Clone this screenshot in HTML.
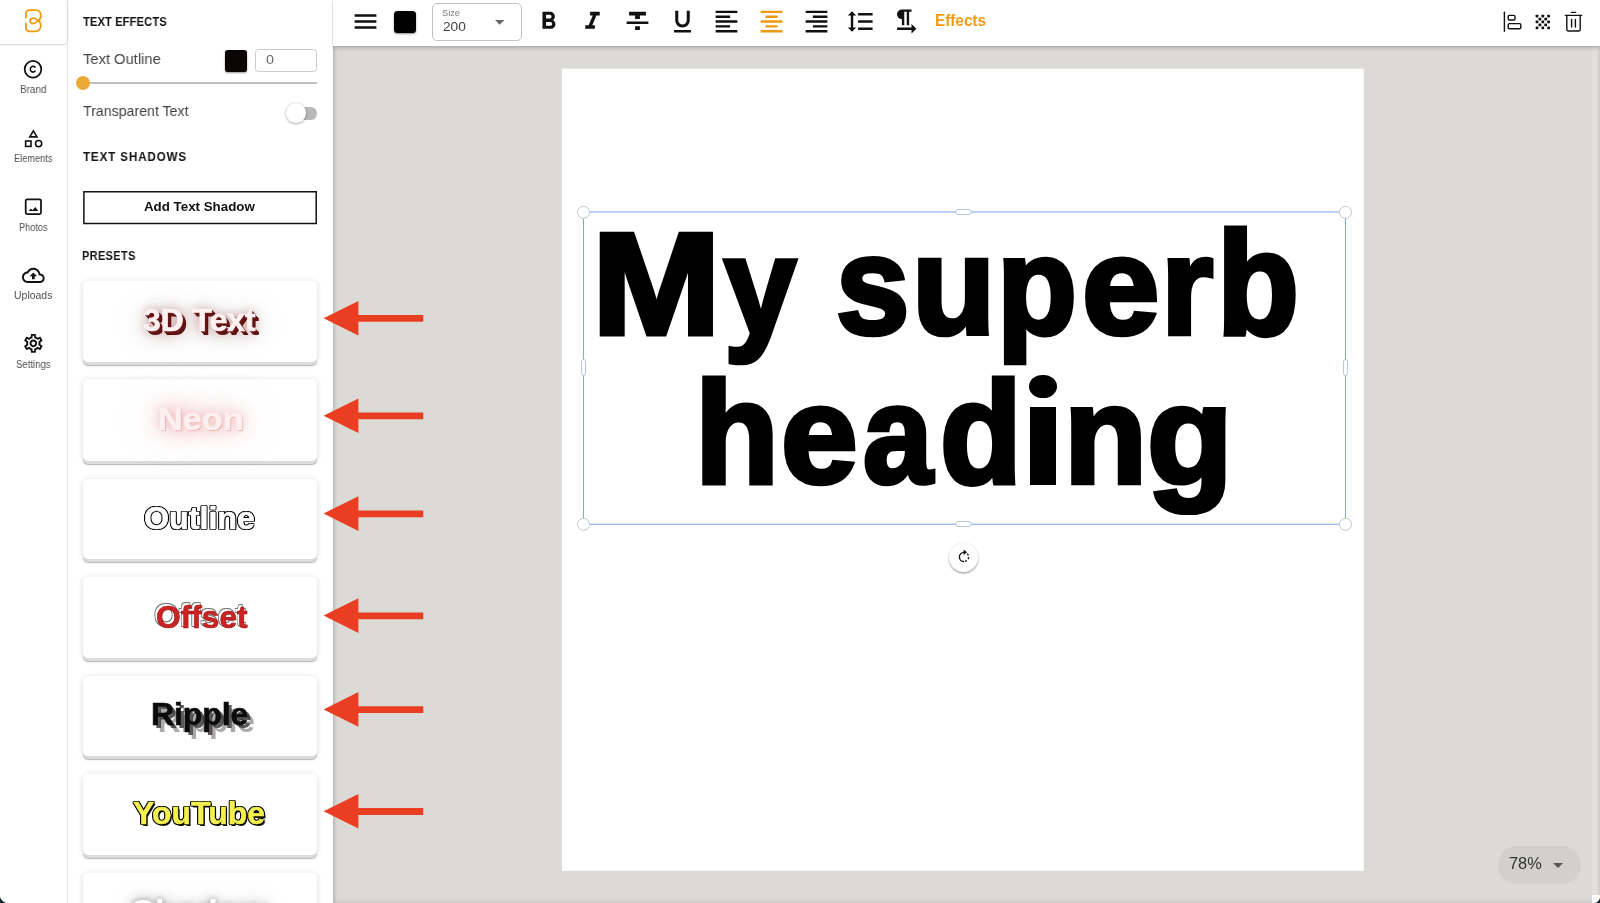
<!DOCTYPE html>
<html>
<head>
<meta charset="utf-8">
<title>Text Effects</title>
<style>
*{box-sizing:border-box;margin:0;padding:0}
html,body{width:1600px;height:903px;overflow:hidden;background:#dcdad6;font-family:"Liberation Sans",sans-serif;color:#111}
.abs{position:absolute}
.t{position:absolute;white-space:nowrap;transform-origin:0 0;line-height:1;will-change:transform}
/* left rail */
#rail{left:0;top:0;width:67px;height:903px;background:#fff}
#raildiv{left:67px;top:0;width:1px;height:903px;background:#e4e4e4}
#logo{left:0;top:0;width:67px;height:44px;background:#fff;border-bottom-right-radius:4px;box-shadow:0 1px 2px rgba(0,0,0,.18)}
.nl{color:#505050}
/* panel */
#panel{left:68px;top:0;width:265px;height:903px;background:#fff;box-shadow:1px 0 4px rgba(0,0,0,.22)}
.h{font-weight:bold;font-size:11.5px;letter-spacing:.9px;color:#111}
.lbl{font-size:15.5px;color:#444}
.card{position:absolute;left:82.6px;width:234.8px;height:80.4px;background:#fff;border-radius:5px;box-shadow:0 3px .6px 0 #dcdcdc,0 4px 1px 0 #b6b6b6,0 1px 6px 0 rgba(0,0,0,.14)}
.pt{font-weight:bold}
/* toolbar */
#toolbar{left:333px;top:0;width:1267px;height:45.6px;background:#fff;box-shadow:0 1px 5px rgba(0,0,0,.3);clip-path:inset(0 0 -12px -1px)}
/* canvas */
.hp{position:absolute;background:#fff;border:1px solid #b9c6d8;border-radius:3px}
.g{position:absolute;font:bold 148px/1 "Liberation Sans",sans-serif;color:#000;-webkit-text-stroke:5.0px #000;transform-origin:0 0;white-space:nowrap}
</style>
</head>
<body>
<!-- ============ CANVAS ============ -->
<svg class="abs" style="left:560px;top:66px" width="806" height="808" viewBox="0 0 806 808"><rect x="1.9" y="2.6" width="801.85" height="802.3" fill="#fff"/></svg>
<!--HS-->
<span class="g" style="left:592.19px;top:211.37px;transform:scale(1.0436,0.9813)">M</span>
<span class="g" style="left:723.75px;top:216.27px;transform:scale(0.8764,0.9428)">y</span>
<span class="g" style="left:836.46px;top:216.47px;transform:scale(0.8929,0.9412)">s</span>
<span class="g" style="left:912.03px;top:216.27px;transform:scale(0.9243,0.9428)">u</span>
<span class="g" style="left:996.81px;top:215.80px;transform:scale(0.8844,0.9464)">p</span>
<span class="g" style="left:1081.68px;top:216.47px;transform:scale(0.9416,0.9412)">e</span>
<span class="g" style="left:1161.15px;top:215.80px;transform:scale(0.9069,0.9464)">r</span>
<span class="g" style="left:1217.41px;top:210.42px;transform:scale(0.9062,0.9888)">b</span>
<span class="g" style="left:694.58px;top:359.85px;transform:scale(0.9276,0.9830)">h</span>
<span class="g" style="left:780.95px;top:365.17px;transform:scale(0.9318,0.9412)">e</span>
<span class="g" style="left:862.81px;top:365.17px;transform:scale(0.8452,0.9412)">a</span>
<span class="g" style="left:940.13px;top:359.85px;transform:scale(0.9051,0.9830)">d</span>
<div style="position:absolute;left:1030px;top:406.9px;width:26.3px;height:78px;background:#000"></div><div style="position:absolute;left:1029.4px;top:374.6px;width:27.6px;height:23.6px;border-radius:50%;background:#000"></div>
<span class="g" style="left:1064.07px;top:364.50px;transform:scale(0.9188,0.9464)">n</span>
<span class="g" style="left:1147.45px;top:365.17px;transform:scale(0.9494,0.9412)">g</span>
<!--HE-->
<svg class="abs" style="left:570px;top:200px" width="790" height="340" viewBox="0 0 790 340"><rect x="13.5" y="11.95" width="762" height="312.35" fill="none" stroke="#79a7ee" stroke-width="1"/><g fill="#fff" stroke="#c3c8cf" stroke-width="1"><circle cx="13.55" cy="12.35" r="6.05"/><circle cx="13.55" cy="324.35" r="6.05"/><circle cx="775.50" cy="12.35" r="6.05"/><circle cx="775.50" cy="324.35" r="6.05"/></g></svg>
<div class="hp" style="left:955.4px;top:209.2px;width:16.6px;height:5.4px"></div>
<div class="hp" style="left:955.4px;top:521.4px;width:16.6px;height:5.4px"></div>
<div class="hp" style="left:580.9px;top:359.4px;width:5.4px;height:16.4px"></div>
<div class="hp" style="left:1342.7px;top:359.4px;width:5.4px;height:16.4px"></div>
<div id="rot" class="abs" style="left:949.1px;top:542.6px;width:29px;height:29px;border-radius:50%;background:#fff;box-shadow:0 1.5px 2px rgba(0,0,0,.32),0 0 2px rgba(0,0,0,.12)"></div>
<svg class="abs" style="left:955px;top:547px" width="18" height="18" viewBox="0 0 18 18"><g fill="none" stroke="#111" stroke-width="1.35"><path d="M9 5.300A4.600 4.600 0 1 0 9 14.500"/><path d="M9 14.500A4.600 4.600 0 0 0 9 5.300" stroke-dasharray="2.1 1.7" stroke-dashoffset="-0.9"/></g><path d="M8.6 2.600L12 5.300L8.600 8Z" fill="#111"/></svg>
<!-- zoom pill -->
<div class="abs" style="left:1498px;top:846px;width:83px;height:38px;border-radius:19px;background:#d2d0cc"></div>
<div class="t" id="zt" style="left:1508.76px;top:854.82px;font-size:16.4px;transform:scaleX(0.9886);color:#333">78%</div>
<svg class="abs" style="left:1553px;top:863px" width="10" height="5"><path d="M0 0h10l-5 5z" fill="#555"/></svg>

<!-- window edges -->
<div class="abs" style="left:1592px;top:46px;width:6.4px;height:857px;background:#e0dfdc"></div>
<div class="abs" style="left:1598.4px;top:46px;width:1.6px;height:857px;background:#d1cfcc"></div>
<div class="abs" style="left:333px;top:896px;width:1267px;height:7px;background:linear-gradient(#dcdad6 0%,#d9d7d3 55%,#c9c7c4 100%)"></div>
<svg class="abs" style="left:1591.8px;top:894.8px" width="8.2" height="8.2" viewBox="0 0 8.2 8.2"><rect width="8.2" height="8.2" fill="#fff"/><path d="M8.2 1.4A7.6 7.6 0 0 1 2.3 8.2H8.2Z" fill="#10272d"/></svg>
<!-- ============ TOOLBAR ============ -->
<div id="tbwrap" class="abs" style="left:0;top:0;width:1600px;height:60px;z-index:5;pointer-events:none">
<div id="toolbar" class="abs"></div>
<svg class="abs" style="left:350.5px;top:6.9px" width="29" height="29" viewBox="0 0 24 24"><path fill="#111" d="M3 18h18v-2H3v2zm0-5h18v-2H3v2zm0-7v2h18V6H3z"/></svg>
<div class="abs" style="left:393.8px;top:10.6px;width:22.3px;height:22.5px;border-radius:3.5px;background:#000;box-shadow:0 1px 2px rgba(0,0,0,.45)"></div>
<div class="abs" style="left:431.5px;top:3px;width:90.2px;height:37.7px;border-radius:5px;border:1px solid #c2c2c2;background:#fff"></div>
<div class="t" id="tsz" style="left:441.83px;top:9.35px;font-size:9.08px;transform:scaleX(1.017);color:#777">Size</div>
<div class="t" id="t200" style="left:442.69px;top:19.62px;font-size:13.3px;transform:scaleX(1.03);color:#444">200</div>
<svg class="abs" style="left:494.7px;top:20px" width="9.2" height="4.7" viewBox="0 0 10 5"><path d="M0 0h10l-5 5z" fill="#666"/></svg>
<svg class="abs" style="left:533.5px;top:7.1px" width="29" height="29" viewBox="0 0 24 24"><path fill="#111" d="M15.6 10.79c.97-.67 1.65-1.77 1.65-2.79 0-2.26-1.75-4-4-4H7v14h7.04c2.09 0 3.71-1.7 3.71-3.79 0-1.52-.86-2.82-2.15-3.42zM10 6.5h3c.83 0 1.5.67 1.5 1.5s-.67 1.5-1.5 1.5h-3v-3zm3.5 9H10v-3h3.5c.83 0 1.5.67 1.5 1.5s-.67 1.5-1.5 1.5z"/></svg>
<svg class="abs" style="left:578.2px;top:7.1px" width="29" height="29" viewBox="0 0 24 24"><path fill="#111" d="M10 4v3h2.21l-3.42 8H6v3h8v-3h-2.21l3.42-8H18V4z"/></svg>
<svg class="abs" style="left:622.9px;top:7.1px" width="29" height="29" viewBox="0 0 24 24"><path fill="#111" d="M10 19h4v-3h-4v3zM5 4v3h5v3h4V7h5V4H5zM3 14h18v-2H3v2z"/></svg>
<svg class="abs" style="left:667.6px;top:7.1px" width="29" height="29" viewBox="0 0 24 24"><path fill="#111" d="M12 17c3.31 0 6-2.69 6-6V3h-2.5v8c0 1.93-1.57 3.5-3.5 3.5S8.5 12.93 8.5 11V3H6v8c0 3.31 2.69 6 6 6zm-7 2v2h14v-2H5z"/></svg>
<svg class="abs" style="left:712.3px;top:7.1px" width="29" height="29" viewBox="0 0 24 24"><path fill="#111" d="M15 15H3v2h12v-2zm0-8H3v2h12V7zM3 13h18v-2H3v2zm0 8h18v-2H3v2zM3 3v2h18V3H3z"/></svg>
<svg class="abs" style="left:757.0px;top:7.1px" width="29" height="29" viewBox="0 0 24 24"><path fill="#ee9a0c" d="M7 15v2h10v-2H7zm-4 6h18v-2H3v2zm0-8h18v-2H3v2zm4-6v2h10V7H7zM3 3v2h18V3H3z"/></svg>
<svg class="abs" style="left:801.7px;top:7.1px" width="29" height="29" viewBox="0 0 24 24"><path fill="#111" d="M3 21h18v-2H3v2zm6-4h12v-2H9v2zm-6-4h18v-2H3v2zm6-4h12V7H9v2zM3 3v2h18V3H3z"/></svg>
<svg class="abs" style="left:846.4000000000001px;top:7.1px" width="29" height="29" viewBox="0 0 24 24"><path fill="#111" d="M6 7h2.5L5 3.5 1.5 7H4v10H1.5L5 20.5 8.500 17H6V7zm4-2v2h12V5H10zm0 14h12v-2H10v2zm0-6h12v-2H10v2z"/></svg>
<svg class="abs" style="left:891.1px;top:7.1px" width="29" height="29" viewBox="0 0 24 24"><path fill="#111" d="M9 10v5h2V4h2v11h2V4h2V2H9C6.79 2 5 3.79 5 6s1.79 4 4 4zm12 8l-4-4v3H5v2h12v3l4-4z"/></svg>
<div class="t" id="teff" style="left:934.64px;top:11.75px;font-size:16.35px;transform:scaleX(0.9351);font-weight:bold;color:#ee9a0c">Effects</div>
<svg class="abs" style="left:1500px;top:8px" width="26" height="28" viewBox="0 0 26 28"><g fill="none" stroke="#111" stroke-width="1.4" stroke-linecap="round" stroke-linejoin="round"><path d="M4.4 4.2V23.2"/><rect x="8.2" y="7.4" width="6.8" height="4.6" rx="1"/><rect x="8.2" y="15.6" width="12.6" height="5.2" rx="1.2"/></g></svg>
<svg class="abs" style="left:1534px;top:13px" width="18" height="18" viewBox="0 0 18 18"><g fill="#111"><rect x="1.65" y="1.75" width="2.7" height="2.7" rx="0.6"/><rect x="7.45" y="1.75" width="2.7" height="2.7" rx="0.6"/><rect x="13.25" y="1.75" width="2.7" height="2.7" rx="0.6"/><rect x="4.55" y="4.70" width="2.7" height="2.7" rx="0.6"/><rect x="10.35" y="4.70" width="2.7" height="2.7" rx="0.6"/><rect x="1.65" y="7.60" width="2.7" height="2.7" rx="0.6"/><rect x="7.45" y="7.60" width="2.7" height="2.7" rx="0.6"/><rect x="13.25" y="7.60" width="2.7" height="2.7" rx="0.6"/><rect x="4.55" y="10.55" width="2.7" height="2.7" rx="0.6"/><rect x="10.35" y="10.55" width="2.7" height="2.7" rx="0.6"/><rect x="1.65" y="13.45" width="2.7" height="2.7" rx="0.6"/><rect x="7.45" y="13.45" width="2.7" height="2.7" rx="0.6"/><rect x="13.25" y="13.45" width="2.7" height="2.7" rx="0.6"/></g></svg>
<svg class="abs" style="left:1562px;top:9px" width="24" height="26" viewBox="0 0 24 26"><g fill="none" stroke="#111" stroke-width="1.4" stroke-linecap="round" stroke-linejoin="round"><path d="M3.4 6.4H19.6"/><path d="M9.4 3.4H13.6"/><path d="M4.8 6.6V20.6A1.4 1.4 0 0 0 6.2 22H16.8A1.4 1.4 0 0 0 18.2 20.600V6.6"/><path d="M9.600 10.500V18"/><path d="M13.400 10.500V18"/></g></svg>

</div>
<!-- ============ PANEL ============ -->
<div id="panel" class="abs"></div>
<div class="t h" id="h1" style="left:82.7px;top:15.62px;font-size:12.5px;letter-spacing:0.1px;transform:scaleX(0.895)">TEXT EFFECTS</div>
<div class="t lbl" id="l1" style="left:82.53px;top:50.62px;font-size:15.55px;transform:scaleX(0.9468)">Text Outline</div>
<div class="abs" style="left:225px;top:49.7px;width:22.1px;height:22.4px;border-radius:2.8px;background:#0b0405;box-shadow:0 1px 2px rgba(0,0,0,.4)"></div>
<div class="abs" style="left:255.1px;top:49.3px;width:61.8px;height:23.1px;border-radius:3.5px;border:1px solid #cccccc;background:#fff"></div>
<div class="t" id="in0" style="left:266.17px;top:54.11px;font-size:12.21px;transform:scaleX(1.1807);color:#666">0</div>
<div class="abs" style="left:83px;top:82.1px;width:234px;height:1.8px;background:#c0c0c0"></div>
<div class="abs" style="left:75.5px;top:75.5px;width:14.5px;height:14.5px;border-radius:50%;background:#eba937"></div>
<div class="t lbl" id="l2" style="left:82.55px;top:103.12px;font-size:15.55px;transform:scaleX(0.9107)">Transparent Text</div>
<div class="abs" style="left:291px;top:107px;width:25.9px;height:12.8px;border-radius:6.4px;background:#b8b8b8"></div>
<div class="abs" style="left:286.3px;top:103.4px;width:19.4px;height:19.6px;border-radius:50%;background:#fff;box-shadow:0 1px 3px rgba(0,0,0,.3),0 0 1px rgba(0,0,0,.2)"></div>
<div class="t h" id="h2" style="left:82.76px;top:150.91px;font-size:12.65px;letter-spacing:0.9px;transform:scaleX(0.9231)">TEXT SHADOWS</div>
<svg class="abs" style="left:80px;top:188px" width="240" height="40" viewBox="0 0 240 40"><rect x="3.9" y="3.75" width="232.3" height="31.75" fill="#fff" stroke="#111" stroke-width="1.5"/></svg>
<div class="t" id="btn" style="left:144.35px;top:200.8px;font-size:12.28px;transform:scaleX(1.0861);font-weight:bold;color:#111">Add Text Shadow</div>
<div class="t h" id="h3" style="left:82.05px;top:249.95px;font-size:12.06px;letter-spacing:0.45px;transform:scaleX(0.9051)">PRESETS</div>

<!-- preset cards -->
<div class="card" style="top:281.3px;height:80.5px"></div>
<div class="card" style="top:379.1px;height:81.6px"></div>
<div class="card" style="top:478.75px;height:80.1px"></div>
<div class="card" style="top:576.75px;height:81.0px"></div>
<div class="card" style="top:675.6px;height:80.4px"></div>
<div class="card" style="top:773.6px;height:81.0px"></div>
<div class="card" style="top:872.7px;height:81.0px"></div>
<div class="t pt" id="p1" style="left:143.43px;top:305.0px;font-size:31.25px;transform:scaleX(1.019);color:#fdf1f1;text-shadow:1px 1px 0 #6e1a1a,2px 2px 0 #671616,3px 3px 0 #601212,3.7px 3.7px 0 #5c1010,0 0 8px rgba(125,40,40,.35),1px 3px 18px rgba(125,40,40,.42),0 2px 34px rgba(125,40,40,.3);-webkit-text-stroke:.7px #fdf1f1">3D Text</div>
<div class="t pt" id="p2" style="left:157.59px;top:403.5px;font-size:31.25px;transform:scaleX(1.0977);color:#fdf0f0;text-shadow:.8px .8px 1px #eba8a8,0 0 10px rgba(228,115,115,.42),0 0 24px rgba(228,115,115,.4),0 0 44px rgba(228,115,115,.34),0 0 70px rgba(228,115,115,.24);-webkit-text-stroke:.6px #fdf0f0">Neon</div>
<div class="t pt" id="p3" style="left:144.1px;top:503.0px;font-size:31.25px;transform:scaleX(1.0308);color:#fff;text-shadow:-1px -1px 0 #000,1px -1px 0 #000,-1px 1px 0 #000,1px 1px 0 #000,0 1.2px 0 #000,0 -1.2px 0 #000,1.2px 0 0 #000,-1.2px 0 0 #000;-webkit-text-stroke:.6px #fff">Outline</div>
<div class="t pt" id="p4b" style="left:153.62px;top:599.5px;font-size:31.1px;transform:scaleX(1.0206);color:#fff;text-shadow:-.7px -.7px 0 #777,.7px -.7px 0 #777,-.7px .7px 0 #777,.7px .7px 0 #777">Offset</div>
<div class="t pt" id="p4" style="left:156.12px;top:602.0px;font-size:31.1px;transform:scaleX(1.0206);color:#cb2222;-webkit-text-stroke:.6px #9c1515">Offset</div>
<div class="t pt" id="p5" style="left:151.27px;top:698.7px;font-size:31.25px;transform:scaleX(1.0186);color:#0b0b0b;text-shadow:3.3px 3.3px 0 rgba(45,42,42,.78),6.600px 6.600px 0 rgba(120,116,116,.62);-webkit-text-stroke:.6px #0b0b0b">Ripple</div>
<div class="t pt" id="p6" style="left:132.92px;top:797.7px;font-size:31.1px;transform:scaleX(1.0284);color:#f3f04f;text-shadow:-1px -1px 0 #000,1px -1px 0 #000,-1px 1px 0 #000,1px 1px 0 #000,0 1.2px 0 #000,0 -1.2px 0 #000,1.2px 0 0 #000,-1.2px 0 0 #000,1.6px 1.6px 0 #111;-webkit-text-stroke:.5px #f3f04f">YouTube</div>
<div class="t pt" id="p7" style="left:131.17px;top:895.5px;font-size:31.25px;transform:scaleX(1.1382);color:#fff;text-shadow:0 0 6px rgba(0,0,0,.42),0 0 14px rgba(0,0,0,.3),0 0 26px rgba(0,0,0,.18)">Shadow</div>

<!-- red arrows -->
<svg class="abs" style="left:320px;top:290px" width="110" height="545" viewBox="0 0 110 545"><g fill="#ea3e23"><path d="M3.6 28.20L38.4 10.90V25.00H103.25V31.80H38.4V45.50Z"/><path d="M3.6 125.70L38.4 108.40V122.50H103.25V129.30H38.4V143.00Z"/><path d="M3.6 223.60L38.4 206.30V220.40H103.25V227.20H38.4V240.90Z"/><path d="M3.6 325.60L38.4 308.30V322.40H103.25V329.20H38.4V342.90Z"/><path d="M3.6 419.40L38.4 402.10V416.20H103.25V423.00H38.4V436.70Z"/><path d="M3.6 521.30L38.4 504.00V518.10H103.25V524.90H38.4V538.60Z"/></g></svg>

<div id="rail" class="abs"></div>
<div id="raildiv" class="abs"></div>
<div id="logo" class="abs"></div>
<!-- logo -->
<svg class="abs" style="left:0;top:0" width="67" height="44" viewBox="0 0 67 44"><path d="M25.9 17.6V13.6A3.5 3.5 0 0 1 29.4 10.1H35.4C39 10.1 40.9 12.6 40.9 15.4C40.9 18 39.8 19.6 38.4 20.6C36.600 21.9 35.300 23.600 33.300 23.600C31.400 23.600 30.100 22.400 30.100 20.800C30.100 19.200 31.400 18.100 33.300 18.100C35.300 18.100 36.600 19.500 38.400 20.600C39.800 21.600 40.800 23.200 40.800 25.600C40.800 28.800 38.800 31.300 35.400 31.300H29.400A3.5 3.5 0 0 1 25.900 27.800V23.600" fill="none" stroke="#ef9c08" stroke-width="1.8" stroke-linecap="round" stroke-linejoin="round"/></svg>
<!-- brand -->
<svg class="abs" style="left:22px;top:58px" width="23" height="23" viewBox="0 0 23 23"><circle cx="11" cy="11.2" r="8.3" fill="none" stroke="#111" stroke-width="1.75"/><path d="M13.4 9.7A2.75 2.9 0 1 0 13.4 12.7" fill="none" stroke="#111" stroke-width="1.6"/></svg>
<div class="t nl" id="n1" style="left:19.79px;top:84.28px;font-size:10.61px;transform:scaleX(0.9351)">Brand</div>
<!-- elements -->
<svg class="abs" style="left:22px;top:126px" width="24" height="24" viewBox="0 0 24 24"><g fill="none" stroke="#111" stroke-width="1.6" stroke-linejoin="miter"><path d="M11.4 4.9L15 10.9H7.8Z"/><rect x="3.6" y="15" width="5.4" height="5.4"/><circle cx="16.6" cy="17.6" r="3.1"/></g></svg>
<div class="t nl" id="n2" style="left:13.96px;top:153.18px;font-size:10.61px;transform:scaleX(0.8684)">Elements</div>
<!-- photos -->
<svg class="abs" style="left:22px;top:195px" width="24" height="24" viewBox="0 0 24 24"><rect x="3.7" y="4.4" width="15.3" height="14.6" rx="1.4" fill="none" stroke="#111" stroke-width="1.75"/><path d="M6.6 15.9L8.9 13.4L10.5 15.2L13.3 12.1L16.3 15.9Z" fill="#111"/></svg>
<div class="t nl" id="n3" style="left:18.86px;top:221.58px;font-size:10.61px;transform:scaleX(0.8659)">Photos</div>
<!-- uploads -->
<svg class="abs" style="left:21.9px;top:263.9px" width="22.7" height="22.7" viewBox="0 0 24 24"><path fill="#111" d="M19.35 10.04C18.67 6.59 15.64 4 12 4 9.11 4 6.6 5.64 5.35 8.04 2.34 8.36 0 10.91 0 14c0 3.31 2.69 6 6 6h13c2.76 0 5-2.24 5-5 0-2.64-2.05-4.78-4.65-4.96zM19 18H6c-2.21 0-4-1.79-4-4 0-2.05 1.53-3.76 3.56-3.97l1.07-.11.5-.95C8.08 7.14 9.94 6 12 6c2.62 0 4.88 1.86 5.39 4.43l.3 1.5 1.53.11c1.56.1 2.78 1.41 2.78 2.96 0 1.65-1.35 3-3 3zM8 13h2.55v3h2.9v-3H16l-4-4z"/></svg>
<div class="t nl" id="n4" style="left:13.83px;top:291.07px;font-size:10.47px;transform:scaleX(0.9906)">Uploads</div>
<!-- settings -->
<svg class="abs" style="left:22px;top:332.4px" width="22.7" height="22.7" viewBox="0 0 24 24"><path fill="#111" d="M19.43 12.98c.04-.32.07-.64.07-.98 0-.34-.03-.66-.07-.98l2.11-1.65c.19-.15.24-.42.12-.64l-2-3.46c-.09-.16-.26-.25-.44-.25-.06 0-.12.01-.17.03l-2.49 1c-.52-.4-1.08-.73-1.69-.98l-.38-2.65C14.46 2.18 14.25 2 14 2h-4c-.25 0-.46.18-.49.42l-.38 2.65c-.61.25-1.17.59-1.69.98l-2.49-1c-.06-.02-.12-.03-.18-.03-.17 0-.34.09-.43.25l-2 3.46c-.13.22-.07.49.12.64l2.11 1.65c-.04.32-.07.65-.07.98 0 .33.03.66.07.98l-2.11 1.65c-.19.15-.24.42-.12.64l2 3.46c.09.16.26.25.44.25.06 0 .12-.01.17-.03l2.49-1c.52.4 1.08.73 1.69.98l.38 2.65c.03.24.24.42.49.42h4c.25 0 .46-.18.49-.42l.38-2.65c.61-.25 1.17-.59 1.69-.98l2.49 1c.06.02.12.03.18.03.17 0 .34-.09.43-.25l2-3.46c.12-.22.07-.49-.12-.64l-2.11-1.65zm-1.98-1.71c.04.31.05.52.05.73 0 .21-.02.43-.05.73l-.14 1.13.89.7 1.08.84-.7 1.21-1.27-.51-1.04-.42-.9.68c-.43.32-.84.56-1.25.73l-1.06.43-.16 1.13-.2 1.35h-1.4l-.19-1.35-.16-1.13-1.06-.43c-.43-.18-.83-.41-1.23-.71l-.91-.7-1.06.43-1.27.51-.7-1.21 1.08-.84.89-.7-.14-1.13c-.03-.31-.05-.54-.05-.74s.02-.43.05-.73l.14-1.13-.89-.7-1.08-.84.7-1.21 1.27.51 1.04.42.9-.68c.43-.32.84-.56 1.25-.73l1.06-.43.16-1.13.2-1.35h1.39l.19 1.35.16 1.13 1.06.43c.43.18.83.41 1.23.71l.91.7 1.06-.43 1.27-.51.7 1.21-1.07.85-.89.7.14 1.13zM12 8c-2.21 0-4 1.79-4 4s1.79 4 4 4 4-1.79 4-4-1.79-4-4-4zm0 6c-1.1 0-2-.9-2-2s.9-2 2-2 2 .9 2 2-.9 2-2 2z"/></svg>
<div class="t nl" id="n5" style="left:15.71px;top:358.98px;font-size:10.61px;transform:scaleX(0.9017)">Settings</div>

<svg class="abs" style="left:0;top:894px" width="9" height="9" viewBox="0 0 9 9"><path d="M0 0.300A8 8 0 0 0 6.300 9H0Z" fill="#10272d"/></svg>
</body>
</html>
